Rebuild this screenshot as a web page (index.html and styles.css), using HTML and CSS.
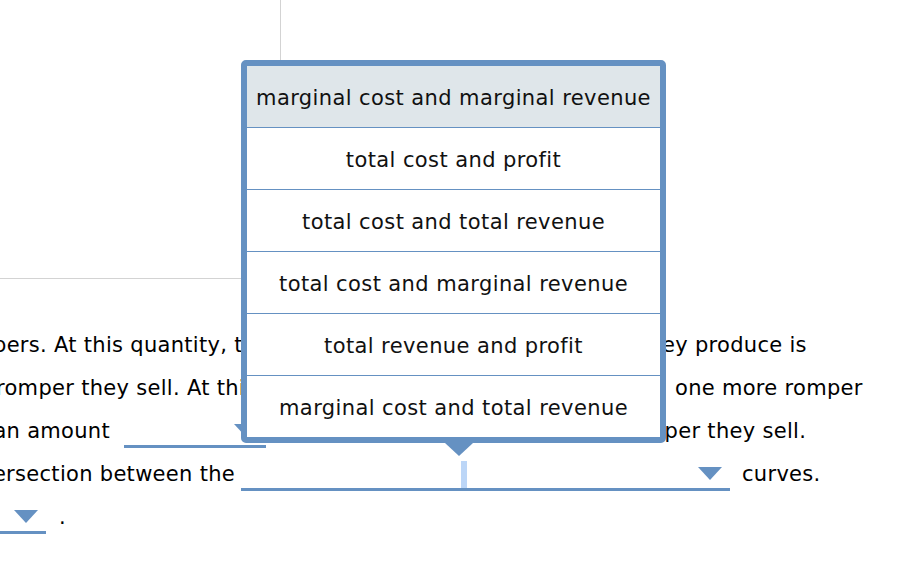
FILE: index.html
```html
<!DOCTYPE html>
<html lang="en">
<head>
  <meta charset="UTF-8">
  <title>Romper Market Question</title>
  <link rel="stylesheet" href="styles.css">
</head>
<body>
  <div class="graph"></div>

  <div class="passage">
    <div class="line">
      <span class="lead"><span class="cut">pers. At this quantity, the</span></span>
      <span class="right r1">ey produce is</span>
    </div>
    <div class="line">
      <span class="lead"><span class="cut small">romper they sell. At this</span></span>
      <span class="right r2">one more romper</span>
    </div>
    <div class="line">
      <span class="lead end w110">a price larger than an amount</span>
      <span class="dropdown short"><span class="arrow"></span></span>
      <span class="right r3">nper they sell.</span>
    </div>
    <div class="line">
      <span class="lead end w235">at the intersection between the</span>
      <span class="dropdown long"><span class="caret"></span><span class="arrow"></span></span>
      <span class="after">curves.</span>
    </div>
    <div class="line">
      <span class="dropdown tiny"><span class="arrow"></span></span>
      <span class="after dot">.</span>
    </div>
  </div>

  <div class="menu">
    <div class="option selected">marginal cost and marginal revenue</div>
    <div class="option">total cost and profit</div>
    <div class="option">total cost and total revenue</div>
    <div class="option">total cost and marginal revenue</div>
    <div class="option">total revenue and profit</div>
    <div class="option">marginal cost and total revenue</div>
  </div>
</body>
</html>
```

FILE: styles.css
```css
body { margin: 0; font-family: "DejaVu Sans", Verdana, sans-serif; font-size: 21px; letter-spacing: 0.3px; color: #000; background: #fff; overflow: hidden; }

.graph { width: 280px; height: 278px; border-right: 1px solid #d3d3d3; border-bottom: 1px solid #d3d3d3; }

.passage { margin-top: 44px; }
.line { display: flex; align-items: center; height: 43px; white-space: nowrap; }
.lead { display: flex; width: 241px; flex-shrink: 0; overflow: hidden; }
.lead.end { justify-content: flex-end; }
.lead.w110 { width: 110px; }
.lead.w235 { width: 235px; }
.cut { margin-left: -7px; }
.cut.small { margin-left: -4px; }
.right.r1 { margin-left: 421px; }
.right.r2 { margin-left: 434px; }
.right.r3 { margin-left: 385px; }
.after { margin-left: 12px; }
.after.dot { margin-left: 13px; }

.dropdown { position: relative; flex-shrink: 0; display: flex; justify-content: flex-end; align-items: center; height: 28px; padding-top: 3px; padding-right: 8px; border-bottom: 3px solid #6591c2; }
.dropdown.short { width: 134px; margin-left: 14px; }
.dropdown.long { width: 481px; margin-left: 6px; }
.dropdown.tiny { width: 38px; }
.arrow { width: 0; height: 0; border-left: 12px solid transparent; border-right: 12px solid transparent; border-top: 13px solid #6591c2; }
.caret { position: absolute; left: 220px; bottom: 0; width: 6px; height: 27px; background: #bcd6f7; }

.menu { position: absolute; left: 241px; top: 60px; width: 413px; background: #fff; border: 6px solid #6591c2; border-radius: 5px; color: #111; letter-spacing: 0.4px; }
.menu::after { content: ""; position: absolute; left: 198px; bottom: -19px; border-left: 14px solid transparent; border-right: 14px solid transparent; border-top: 13px solid #6591c2; }
.option { height: 58px; padding-top: 3px; line-height: 58px; text-align: center; border-bottom: 1px solid #6591c2; }
.option:last-child { border-bottom: none; }
.option.selected { background: #dfe6ea; }
```
